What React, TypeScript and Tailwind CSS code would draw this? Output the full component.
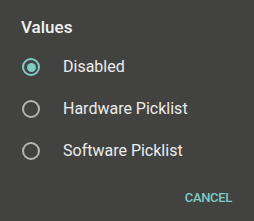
const OPTIONS = ['Disabled', 'Hardware Picklist', 'Software Picklist']

export default function App() {
  const selected = 0

  return (
    <div className="w-[254px] h-[221px] bg-[#424341] font-['Roboto',sans-serif] flex flex-col">
      <h2 className="pl-[21px] pt-[17px] text-[17px] leading-[20px] font-medium text-[#f2f2f2]">Values</h2>

      <div className="flex flex-col mt-[9px]">
        {OPTIONS.map((label, i) => (
          <div key={label} className="h-[42px] flex items-center">
            <div className="w-[62px] flex justify-center">
              {i === selected ? (
                <div className="w-[18px] h-[18px] rounded-full border-2 border-[#80cbc4] flex items-center justify-center">
                  <div className="w-[9px] h-[9px] rounded-full bg-[#80cbc4]" />
                </div>
              ) : (
                <div className="w-[18px] h-[18px] rounded-full border-2 border-[#b5b5b5]" />
              )}
            </div>
            <span className="ml-[1px] text-[16px] text-[#ececec]">{label}</span>
          </div>
        ))}
      </div>

      <div className="flex justify-end pr-[22px] mt-[16px]">
        <button className="text-[13px] font-medium text-[#80cbc4] tracking-tight">CANCEL</button>
      </div>
    </div>
  )
}
